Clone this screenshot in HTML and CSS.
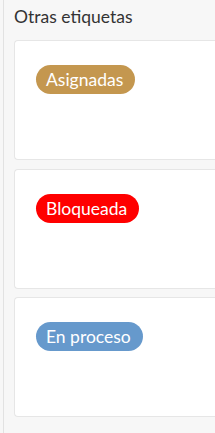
FILE: index.html
```html
<!DOCTYPE html>
<html lang="es">
<head>
    <meta charset="UTF-8">
    <meta name="viewport" content="width=device-width, initial-scale=1.0">
    <title>Otras etiquetas</title>
    <link rel="stylesheet" href="styles.css">
</head>
<body>
    <div class="panel">
        <h3 class="title">Otras etiquetas</h3>
        <div class="card">
            <span class="tag tag-asignadas">Asignadas</span>
        </div>
        <div class="card">
            <span class="tag tag-bloqueada">Bloqueada</span>
        </div>
        <div class="card">
            <span class="tag tag-proceso">En proceso</span>
        </div>
    </div>
</body>
</html>
```
FILE: styles.css
```css
html,body{
    margin:0;
    background:#f7f7f7;
}
body{
    font-family:Lato,"Open Sans",sans-serif;
    color:#333;
}
.panel{
    margin-left:3px;
    border-left:1px solid #e2e2e2;
    padding:0 0 0 10px;
    min-height:433px;
    box-sizing:border-box;
}
.title{
    margin:0;
    padding-top:6px;
    height:40px;
    box-sizing:border-box;
    font-size:17.5px;
    font-weight:normal;
    line-height:22px;
}
/* la tarjeta sigue mas alla del borde derecho */
.card{
    background:#fff;
    border:1px solid #e6e6e6;
    border-right:0;
    border-radius:4px 0 0 4px;
    height:120px;
    margin-bottom:8.5px;
    padding:24px 0 0 21px;
    box-sizing:border-box;
}
.tag{
    display:inline-block;
    height:29px;
    line-height:29px;
    padding:0 12px 0 10px;
    border-radius:15px;
    color:#fff;
    font-size:17.5px;
}
.tag-asignadas{
    background:#c4974f;
}
.tag-bloqueada{
    background:#ff0000;
}
.tag-proceso{
    background:#6699cc;
}
```
